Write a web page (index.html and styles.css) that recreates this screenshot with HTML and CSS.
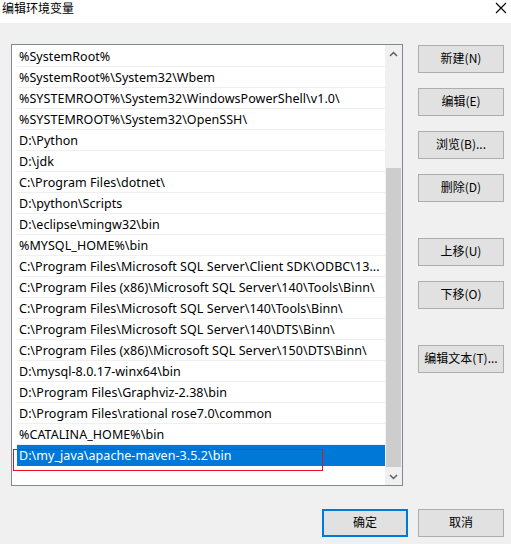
FILE: index.html
```html
<!DOCTYPE html>
<html>
<head>
<meta charset="utf-8">
<link rel="stylesheet" href="styles.css">
</head>
<body>
<div class="window">
  <div class="titlebar">
    <span class="title">编辑环境变量</span>
    <svg class="close" width="12" height="12" viewBox="0 0 12 12"><path d="M1 1 L11 11 M11 1 L1 11" stroke="#000" stroke-width="1.1" fill="none"/></svg>
  </div>
  <div class="main">
    <div class="listbox">
      <div class="rows">
        <div class="row">%SystemRoot%</div>
        <div class="row">%SystemRoot%\System32\Wbem</div>
        <div class="row">%SYSTEMROOT%\System32\WindowsPowerShell\v1.0\</div>
        <div class="row">%SYSTEMROOT%\System32\OpenSSH\</div>
        <div class="row">D:\Python</div>
        <div class="row">D:\jdk</div>
        <div class="row">C:\Program Files\dotnet\</div>
        <div class="row">D:\python\Scripts</div>
        <div class="row">D:\eclipse\mingw32\bin</div>
        <div class="row">%MYSQL_HOME%\bin</div>
        <div class="row">C:\Program Files\Microsoft SQL Server\Client SDK\ODBC\13...</div>
        <div class="row">C:\Program Files (x86)\Microsoft SQL Server\140\Tools\Binn\</div>
        <div class="row">C:\Program Files\Microsoft SQL Server\140\Tools\Binn\</div>
        <div class="row">C:\Program Files\Microsoft SQL Server\140\DTS\Binn\</div>
        <div class="row">C:\Program Files (x86)\Microsoft SQL Server\150\DTS\Binn\</div>
        <div class="row">D:\mysql-8.0.17-winx64\bin</div>
        <div class="row">D:\Program Files\Graphviz-2.38\bin</div>
        <div class="row">D:\Program Files\rational rose7.0\common</div>
        <div class="row">%CATALINA_HOME%\bin</div>
        <div class="row selected">D:\my_java\apache-maven-3.5.2\bin<span class="mark"></span></div>
      </div>
      <div class="scrollbar">
        <div class="arrow up"><svg width="9" height="6" viewBox="0 0 9 6"><path d="M1 5 L4.5 1.5 L8 5" stroke="#606060" stroke-width="1.5" fill="none"/></svg></div>
        <div class="track"><div class="thumb"></div></div>
        <div class="arrow down"><svg width="9" height="6" viewBox="0 0 9 6"><path d="M1 1 L4.5 4.5 L8 1" stroke="#606060" stroke-width="1.5" fill="none"/></svg></div>
      </div>
    </div>
    <div class="side">
      <div class="group">
        <button class="btn">新建(N)</button>
        <button class="btn">编辑(E)</button>
        <button class="btn">浏览(B)...</button>
        <button class="btn">删除(D)</button>
      </div>
      <div class="group">
        <button class="btn">上移(U)</button>
        <button class="btn">下移(O)</button>
      </div>
      <div class="group">
        <button class="btn">编辑文本(T)...</button>
      </div>
    </div>
  </div>
  <div class="footer">
    <button class="btn primary">确定</button>
    <button class="btn">取消</button>
  </div>
</div>
</body>
</html>
```
FILE: styles.css
```css
* { box-sizing: border-box; }
html, body { margin: 0; padding: 0; }
body {
  width: 511px;
  height: 544px;
  background: #f0f0f0;
  font-family: "Noto Sans", "Noto Sans CJK SC", sans-serif;
  font-size: 12px;
  color: #000;
  overflow: hidden;
}
.window { width: 511px; height: 544px; }
.titlebar {
  height: 23px;
  background: #fff;
  display: flex;
  align-items: flex-start;
  justify-content: space-between;
  padding: 0 4px 0 2px;
}
.title {
  font-family: "Noto Sans CJK SC", sans-serif;
  font-size: 12px;
  line-height: 16px;
}
.close { margin-top: 2px; }
.main {
  display: flex;
  padding: 21px 0 0 11px;
}
.listbox {
  width: 392px;
  height: 442px;
  border: 1px solid #828790;
  background: #fff;
  display: flex;
}
.rows {
  flex: 1;
  padding: 1px 0 0 5px;
}
.row {
  height: 21px;
  line-height: 22px;
  border-bottom: 1px solid #f0f0f0;
  padding-left: 2px;
  white-space: nowrap;
  overflow: hidden;
  position: relative;
  font-family: "Noto Sans", sans-serif;
  font-size: 12.5px;
  letter-spacing: 0.05px;
}
.row.selected {
  background: #0078d7;
  color: #fff;
  border-bottom-color: #0078d7;
  overflow: visible;
  z-index: 2;
}
.mark {
  position: absolute;
  left: -4px;
  top: 4px;
  width: 310px;
  height: 22px;
  border: 1px solid #e81123;
}
.scrollbar {
  width: 17px;
  background: #f0f0f0;
  display: flex;
  flex-direction: column;
}
.arrow {
  height: 17px;
  display: flex;
  align-items: center;
  justify-content: center;
}
.track {
  flex: 1;
  padding: 106px 1px 0 1px;
}
.thumb {
  height: 299px;
  background: #cdcdcd;
}
.side {
  margin-left: 15px;
  display: flex;
  flex-direction: column;
  padding-top: 1px;
}
.group {
  display: flex;
  flex-direction: column;
  gap: 15px;
  margin-bottom: 36px;
}
.btn {
  width: 86px;
  height: 28px;
  background: #e1e1e1;
  border: 1px solid #adadad;
  font-family: "Noto Sans CJK SC", sans-serif;
  font-size: 12px;
  line-height: 14px;
  color: #000;
  padding: 0 0 2px 0;
  margin: 0;
}
.footer {
  display: flex;
  justify-content: flex-end;
  gap: 10px;
  padding: 23px 7px 0 0;
}
.btn.primary {
  border: 2px solid #0078d7;
}
```
